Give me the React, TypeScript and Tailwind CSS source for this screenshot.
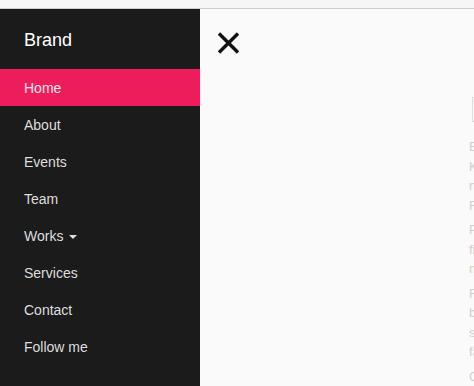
import React from "react";

const links = ["Home", "About", "Events", "Team", "Works", "Services", "Contact", "Follow me"];

const paragraphs = [
  ["Bacon ipsum dolor amet", "Kielbasa pork belly", "nulla short loin", "Frankfurter ham"],
  ["Pastrami tenderloin", "filet mignon chuck", "meatball sirloin"],
  ["Flank brisket jowl", "beef ribs turkey", "shank capicola", "fatback pancetta"],
  ["Cupim ground round"],
];

function Sidebar() {
  return (
    <aside className="w-[200px] shrink-0 bg-[#1b1b1b] h-[377px]">
      <div className="h-[60px] flex items-center px-6 pt-[2px] text-[18px] text-white">Brand</div>
      <nav className="flex flex-col">
        {links.map((label, i) => (
          <a
            key={label}
            href="#"
            className={
              i === 0
                ? "h-[37px] flex items-center px-6 pt-[2px] text-[14px] bg-[#ed1d5c] text-[#fde8ef]"
                : "h-[37px] flex items-center px-6 pt-[2px] text-[14px] text-[#dedede]"
            }
          >
            {label}
            {label === "Works" && (
              <span className="ml-[6px] mt-[1px] w-0 h-0 border-l-[4px] border-r-[4px] border-t-[4px] border-l-transparent border-r-transparent border-t-[#dedede]" />
            )}
          </a>
        ))}
      </nav>
    </aside>
  );
}

export default function App() {
  return (
    <div className="w-full h-[386px] overflow-hidden bg-[#fafafa]" style={{ fontFamily: '"Liberation Sans", Arial, sans-serif' }}>
      <div className="h-[9px] bg-[#f6f6f6] border-b border-[#cdcdcd]" />
      <div className="flex">
        <Sidebar />
        <main className="flex-1 min-w-0 overflow-hidden flex pl-[17px] pt-[23px] bg-[#fafafa]">
          <svg width="23" height="22" viewBox="0 0 23 22" className="shrink-0">
            <path d="M2 1.5 L21 20.5 M21 1.5 L2 20.5" stroke="#111" strokeWidth="3.4" strokeLinecap="butt" />
          </svg>
          <div className="ml-[229px] mt-[65px] shrink-0 text-[13px] leading-[19.5px] text-[#cfcfcf]">
            <div className="ml-[3px] w-[200px] h-[25px] border border-[#dedede] bg-[#f9f9f9]" />
            <div className="mt-[15px]">
              {paragraphs.map((lines, i) => (
                <p key={i} className="mb-[5px]">
                  {lines.map((l) => (
                    <span key={l} className="block whitespace-nowrap">
                      {l}
                    </span>
                  ))}
                </p>
              ))}
            </div>
          </div>
        </main>
      </div>
    </div>
  );
}
